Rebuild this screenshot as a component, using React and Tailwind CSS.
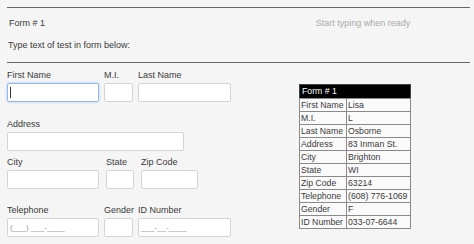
const FIELDS = [
  ["First Name", "Lisa"],
  ["M.I.", "L"],
  ["Last Name", "Osborne"],
  ["Address", "83 Inman St."],
  ["City", "Brighton"],
  ["State", "WI"],
  ["Zip Code", "63214"],
  ["Telephone", "(608) 776-1069"],
  ["Gender", "F"],
  ["ID Number", "033-07-6644"],
];

function Field({ label, w, focused, placeholder }) {
  return (
    <div className="flex flex-col" style={{ width: w }}>
      <div className="h-[11px] leading-[11px] mb-[2px] whitespace-nowrap">{label}</div>
      <div
        className={
          "h-[19px] bg-white rounded-[2px] flex items-center px-[2px] " +
          (focused
            ? "border border-[#8fbbe6] shadow-[0_0_3px_#a9cdf0]"
            : "border border-[#d4d4d4]")
        }
      >
        {focused && <span className="w-px h-[11px] bg-[#333]" />}
        {placeholder && <span className="text-[#999] text-[8px] leading-none">{placeholder}</span>}
      </div>
    </div>
  );
}

export default function App() {
  return (
    <div
      className="w-[474px] h-[244px] bg-[#f5f5f5] text-[#3a3a3a] text-[9px] leading-[11px] pl-[7px] pr-[4px] pt-[7px] overflow-hidden"
      style={{ fontFamily: '"Liberation Sans", Arial, sans-serif' }}
    >
      <div className="border-t border-[#666]" />
      <div className="flex pt-[10px]">
        <div className="w-[231px] pl-[2px]">Form # 1</div>
        <div className="flex-1 text-center text-[#aaa] pl-[18px]">Start typing when ready</div>
      </div>
      <div className="mt-[11px] pl-[1px]">Type text of test in form below:</div>
      <div className="border-t border-[#666] mt-[11px]" />

      <div className="flex">
        <div className="w-[224px]">
          <div className="flex gap-[5px] mt-[7px]">
            <Field label="First Name" w={92} focused />
            <Field label="M.I." w={29} />
            <Field label="Last Name" w={93} />
          </div>
          <div className="flex mt-[17px]">
            <Field label="Address" w={177} />
          </div>
          <div className="flex gap-[7px] mt-[6px]">
            <Field label="City" w={92} />
            <Field label="State" w={28} />
            <Field label="Zip Code" w={57} />
          </div>
          <div className="flex gap-[5px] mt-[16px]">
            <Field label="Telephone" w={92} placeholder="(___) ___-____" />
            <Field label="Gender" w={29} />
            <Field label="ID Number" w={93} placeholder="___-__-____" />
          </div>
        </div>

        <table className="ml-[68px] mt-[21px] self-start table-fixed w-[111px] border-collapse border border-[#444] text-[8.7px]">
          <colgroup>
            <col className="w-[47px]" />
            <col className="w-[64px]" />
          </colgroup>
          <thead>
            <tr>
              <th colSpan={2} className="bg-black text-white font-normal text-left h-[14px] px-[2px] leading-[13px]">
                Form # 1
              </th>
            </tr>
          </thead>
          <tbody>
            {FIELDS.map(([k, v]) => (
              <tr key={k} className="h-[13px]">
                <td className="border border-[#8a8a8a] bg-[#fafafa] px-[1px] leading-[12px] whitespace-nowrap overflow-hidden">{k}</td>
                <td className="border border-[#8a8a8a] bg-[#fafafa] px-[1px] leading-[12px] whitespace-nowrap overflow-hidden">{v}</td>
              </tr>
            ))}
          </tbody>
        </table>
      </div>
    </div>
  );
}
